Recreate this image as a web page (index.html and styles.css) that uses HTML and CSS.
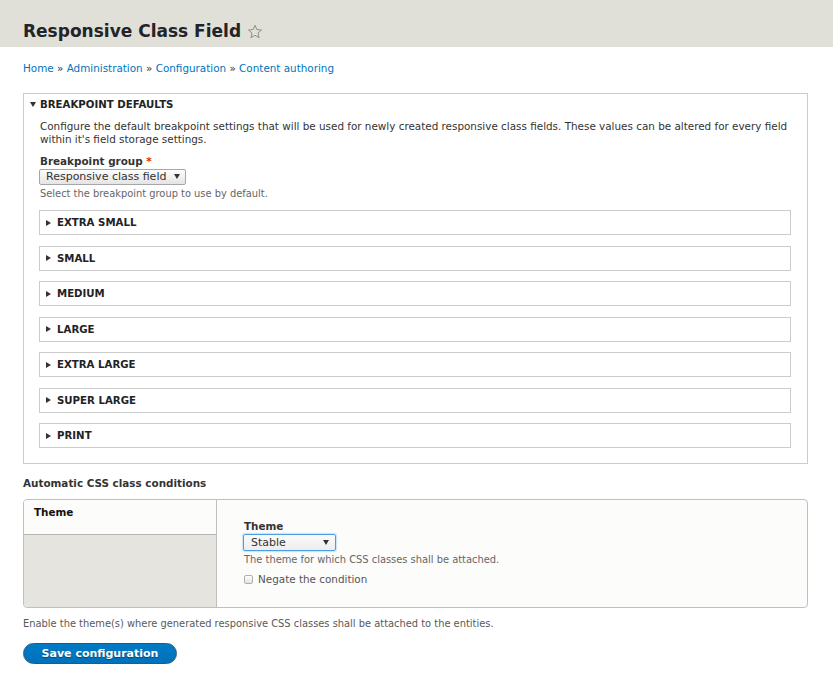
FILE: index.html
```html
<!DOCTYPE html>
<html lang="en">
<head>
<meta charset="utf-8">
<title>Responsive Class Field</title>
<link rel="stylesheet" href="styles.css">
</head>
<body>
<header class="page-header">
  <h1 class="page-title">Responsive Class Field</h1>
  <svg class="star" width="16" height="16" viewBox="0 0 16 16" aria-hidden="true"><path d="M8 1.3 L9.9 5.6 L14.5 6 L11 9.1 L12.1 13.7 L8 11.3 L3.9 13.7 L5 9.1 L1.5 6 L6.1 5.6 Z" fill="none" stroke="#8f8f88" stroke-width="1" stroke-linejoin="round"/></svg>
</header>
<main class="main">
  <nav class="breadcrumb">
    <a href="#">Home</a> » <a href="#">Administration</a> » <a href="#">Configuration</a> » <a href="#">Content authoring</a>
  </nav>

  <section class="details">
    <div class="summary"><span class="tri-down"></span>BREAKPOINT DEFAULTS</div>
    <div class="details-body">
      <p class="intro">Configure the default breakpoint settings that will be used for newly created responsive class fields. These values can be altered for every field within it's field storage settings.</p>
      <div class="label">Breakpoint group <span class="required">*</span></div>
      <div class="select select-group"><span>Responsive class field</span><span class="tri-sel"></span></div>
      <div class="description">Select the breakpoint group to use by default.</div>
      <div class="sub-list">
        <div class="sub"><span class="tri-right"></span>EXTRA SMALL</div>
        <div class="sub"><span class="tri-right"></span>SMALL</div>
        <div class="sub"><span class="tri-right"></span>MEDIUM</div>
        <div class="sub"><span class="tri-right"></span>LARGE</div>
        <div class="sub"><span class="tri-right"></span>EXTRA LARGE</div>
        <div class="sub"><span class="tri-right"></span>SUPER LARGE</div>
        <div class="sub"><span class="tri-right"></span>PRINT</div>
      </div>
    </div>
  </section>

  <div class="section-title">Automatic CSS class conditions</div>
  <div class="vtabs">
    <div class="vtabs-menu">
      <div class="vtab-item">Theme</div>
    </div>
    <div class="vtabs-pane">
      <div class="label">Theme</div>
      <div class="select select-theme"><span>Stable</span><span class="tri-sel"></span></div>
      <div class="description">The theme for which CSS classes shall be attached.</div>
      <label class="check-row"><input type="checkbox" class="checkbox"><span>Negate the condition</span></label>
    </div>
  </div>
  <div class="description footer-desc">Enable the theme(s) where generated responsive CSS classes shall be attached to the entities.</div>
  <button class="button-primary" type="button">Save configuration</button>
</main>
</body>
</html>
```

FILE: styles.css
```css
* { box-sizing: border-box; }
html, body { margin: 0; padding: 0; }
body {
  font-family: "DejaVu Sans", Verdana, sans-serif;
  font-size: 10.4px;
  line-height: 13px;
  color: #333;
  background: #fff;
}
.page-header {
  background: #e0e0d8;
  padding: 21px 23px 6px;
  display: flex;
  align-items: center;
  gap: 6px;
}
.page-title {
  margin: 0;
  font-size: 17px;
  line-height: 20px;
  font-weight: bold;
  color: #232429;
}
.star { display: block; margin-top: 1px; }
.main { padding: 0 25px 0 23px; }
.breadcrumb {
  margin-top: 14px;
  line-height: 15px;
  color: #333;
}
.breadcrumb a { color: #0074bd; text-decoration: none; }

.details {
  margin-top: 17px;
  border: 1px solid #ccc;
  background: #fff;
}
.summary {
  display: flex;
  align-items: center;
  padding: 3px 6px 3px;
  line-height: 15px;
  font-size: 10.2px;
  font-weight: bold;
  color: #222;
}
.tri-down {
  width: 0; height: 0;
  border-left: 3px solid transparent;
  border-right: 3px solid transparent;
  border-top: 5px solid #333;
  margin-right: 4px;
  margin-top: -1px;
}
.details-body { padding: 0 16px 15px 15px; }
.intro { margin: 5px 0 0 1px; }
.label {
  margin-top: 9px;
  margin-left: 1px;
  font-weight: bold;
}
.required { color: #e32700; }
.select {
  display: flex;
  align-items: center;
  justify-content: space-between;
  height: 16px;
  margin-top: 1px;
  padding: 0 5px 1px 6px;
  font-size: 11px;
  border-radius: 2px;
  color: #333;
}
.select-group {
  width: 147px;
  border: 1px solid #a6a6a6;
  background: linear-gradient(#fefefe, #e4e4e4);
}
.tri-sel {
  width: 0; height: 0;
  border-left: 3.5px solid transparent;
  border-right: 3.5px solid transparent;
  border-top: 5px solid #333;
}
.description {
  margin-top: 2px;
  margin-left: 1px;
  font-size: 9.88px;
  color: #666;
}
.sub-list {
  margin-top: 10px;
  display: flex;
  flex-direction: column;
  gap: 10.5px;
}
.sub {
  height: 25px;
  border: 1px solid #ccc;
  display: flex;
  align-items: center;
  padding-left: 6px;
  font-size: 10.2px;
  font-weight: bold;
  color: #222;
}
.tri-right {
  width: 0; height: 0;
  border-top: 3px solid transparent;
  border-bottom: 3px solid transparent;
  border-left: 5px solid #333;
  margin-right: 6px;
}
.section-title {
  margin-top: 12px;
  line-height: 15px;
  font-weight: bold;
}
.vtabs {
  margin-top: 8px;
  height: 109px;
  display: flex;
  border: 1px solid #bfbfbf;
  border-radius: 4px;
  background: #fcfcfa;
  overflow: hidden;
}
.vtabs-menu {
  width: 193px;
  background: #e6e4df;
  border-right: 1px solid #bfbfbf;
}
.vtab-item {
  height: 35px;
  padding: 5px 10px 0;
  line-height: 15px;
  background: #fcfcfa;
  border-bottom: 1px solid #b5b5b5;
  font-weight: bold;
  color: #111;
}
.vtabs-pane {
  flex: 1;
  padding: 8px 0 0 26px;
}
.vtabs-pane .label { margin-top: 12px; }
.select-theme {
  width: 93px;
  height: 17px;
  border: 1px solid #4a9ee6;
  background: linear-gradient(#fbfbfb, #ededed);
  box-shadow: 0 0 1px 1px rgba(110, 180, 240, 0.35);
  padding-left: 7px;
  padding-right: 6px;
}
.vtabs-pane .description { margin-top: 2px; }
.check-row {
  display: flex;
  align-items: center;
  gap: 5px;
  margin-top: 7px;
  margin-left: 1px;
  color: #555;
}
.checkbox {
  appearance: none;
  -webkit-appearance: none;
  width: 9px;
  height: 9px;
  margin: 0 0 1px;
  border: 1px solid #b0b0b0;
  border-radius: 2px;
  background: linear-gradient(#fff, #e3e3e3);
}
.footer-desc { margin-top: 9px; margin-left: 0; color: #595959; }
.button-primary {
  display: block;
  margin-top: 13px;
  width: 154px;
  height: 21px;
  padding: 0;
  border: 1px solid #1e5c90;
  border-radius: 20px;
  background: linear-gradient(#007bc6, #0071b8);
  color: #fff;
  font-family: "DejaVu Sans", Verdana, sans-serif;
  font-size: 11px;
  font-weight: bold;
  text-shadow: 0 1px 1px rgba(0,0,0,0.4);
  line-height: 19px;
}
```
